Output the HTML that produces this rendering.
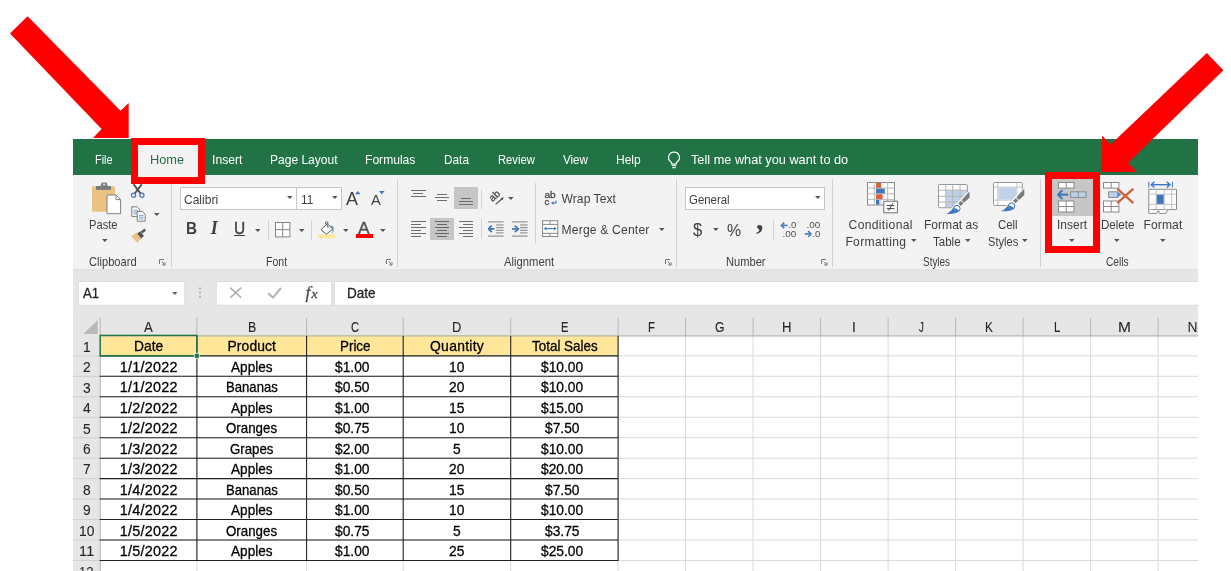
<!DOCTYPE html>
<html lang="en">
<head>
<meta charset="utf-8">
<title>Excel Home tab and Insert button</title>
<style>
html,body{margin:0;padding:0;background:#fff;}
body{width:1231px;height:571px;position:relative;overflow:hidden;font-family:"Liberation Sans", sans-serif;}
#stage{position:absolute;left:0;top:0;width:1231px;height:571px;will-change:transform;}
.t{position:absolute;white-space:nowrap;line-height:20px;display:block;}
.s{font-family:"Liberation Serif", serif;}
.b{position:absolute;display:block;}
</style>
</head>
<body>
<div id="stage">
<div class="b" style="left:73.00px;top:139.00px;width:1125.00px;height:36.00px;background:#217346;"></div>
<div class="b" style="left:73.00px;top:175.00px;width:1125.00px;height:94.00px;background:#f3f3f3;"></div>
<div class="b" style="left:73.00px;top:269.00px;width:1125.00px;height:302.00px;background:#e6e6e6;"></div>
<div class="b" style="left:73.00px;top:268.00px;width:1125.00px;height:3.00px;background:linear-gradient(#f3f3f3,#e9e9e9 45%,#dfdfdf 75%,#e4e4e4);"></div>
<div class="b" style="left:132.00px;top:143.00px;width:72.00px;height:33.00px;background:#f3f3f3;"></div>
<span class="t" style="left:95.30px;top:152px;font-size:13.4px;line-height:15px;color:#fff;transform:scaleX(0.8151);transform-origin:0 0;">File</span>
<span class="t" style="left:212.00px;top:152px;font-size:13.4px;line-height:15px;color:#fff;transform:scaleX(0.9101);transform-origin:0 0;">Insert</span>
<span class="t" style="left:269.80px;top:152px;font-size:13.4px;line-height:15px;color:#fff;transform:scaleX(0.8983);transform-origin:0 0;">Page Layout</span>
<span class="t" style="left:365.00px;top:152px;font-size:13.4px;line-height:15px;color:#fff;transform:scaleX(0.9025);transform-origin:0 0;">Formulas</span>
<span class="t" style="left:444.30px;top:152px;font-size:13.4px;line-height:15px;color:#fff;transform:scaleX(0.8832);transform-origin:0 0;">Data</span>
<span class="t" style="left:497.90px;top:152px;font-size:13.4px;line-height:15px;color:#fff;transform:scaleX(0.8376);transform-origin:0 0;">Review</span>
<span class="t" style="left:562.60px;top:152px;font-size:13.4px;line-height:15px;color:#fff;transform:scaleX(0.8680);transform-origin:0 0;">View</span>
<span class="t" style="left:616.20px;top:152px;font-size:13.4px;line-height:15px;color:#fff;transform:scaleX(0.8963);transform-origin:0 0;">Help</span>
<span class="t" style="left:690.90px;top:152px;font-size:13.4px;line-height:15px;color:#fff;transform:scaleX(0.9513);transform-origin:0 0;">Tell me what you want to do</span>
<span class="t" style="left:150.30px;top:152px;font-size:13.4px;line-height:15px;color:#217346;transform:scaleX(0.9540);transform-origin:0 0;">Home</span>
<svg class="b" style="left:666.00px;top:150.50px" width="16" height="19" viewBox="0 0 16 19"><path d="M8 1.2 a5.3 5.3 0 0 1 3.2 9.6 c-.7 .6 -1 1.3 -1 2.3 h-4.4 c0 -1 -.3 -1.7 -1 -2.3 A5.3 5.3 0 0 1 8 1.2 Z" fill="none" stroke="#fff" stroke-width="1.2"/><path d="M5.9 14.8 h4.2 M6.3 16.6 h3.4" stroke="#fff" stroke-width="1.1"/></svg>
<div class="b" style="left:171.00px;top:178.50px;width:1.00px;height:88.00px;background:#d2d2d2;"></div>
<div class="b" style="left:396.80px;top:178.50px;width:1.00px;height:88.00px;background:#d2d2d2;"></div>
<div class="b" style="left:676.10px;top:178.50px;width:1.00px;height:88.00px;background:#d2d2d2;"></div>
<div class="b" style="left:832.00px;top:178.50px;width:1.00px;height:88.00px;background:#d2d2d2;"></div>
<div class="b" style="left:1039.80px;top:178.50px;width:1.00px;height:88.00px;background:#d2d2d2;"></div>
<svg class="b" style="left:91.00px;top:181.00px" width="34" height="35" viewBox="0 0 34 35"><rect x="1" y="5.2" width="23" height="25.6" rx="1.4" fill="#eac282"/><rect x="5" y="5" width="15" height="3.9" fill="#7a7a7a"/><path d="M9.9 5.2 V3.4 a1.8 1.8 0 0 1 1.8 -1.8 h2.8 a1.8 1.8 0 0 1 1.8 1.8 V5.2 Z" fill="#7a7a7a"/><rect x="12.1" y="2.7" width="2" height="1.5" fill="#f3f3f3"/><path d="M16 14 H25 L29.6 18.6 V32.7 H16 Z" fill="#fff" stroke="#808080" stroke-width="1"/><path d="M25 14 V18.6 H29.6" fill="none" stroke="#808080" stroke-width="1"/></svg>
<span class="t" style="left:89.30px;top:218px;font-size:12.1px;line-height:14px;color:#3e3e3e;transform:scaleX(0.9211);transform-origin:0 0;">Paste</span>
<svg class="b" style="left:100.50px;top:238.15px" width="7.6" height="4.9" viewBox="0 0 7.6 4.9"><path d="M1 1 L6.6 1 L3.8 3.9 Z" fill="#555"/></svg>
<svg class="b" style="left:130.00px;top:183.00px" width="16" height="16" viewBox="0 0 16 16"><path d="M3.6 1.2 L10.8 10.8 M11.8 1.2 L4.6 10.8" stroke="#4a4a4a" stroke-width="1.8" fill="none"/><circle cx="3.5" cy="12.3" r="2.1" fill="none" stroke="#3f76bd" stroke-width="1.2"/><circle cx="11.9" cy="12.3" r="2.1" fill="none" stroke="#3f76bd" stroke-width="1.2"/></svg>
<svg class="b" style="left:131.00px;top:206.00px" width="16" height="16" viewBox="0 0 16 16"><path d="M0.8 0.8 H6 L8.6 3.4 V10.4 H0.8 Z" fill="#fff" stroke="#7a7a7a" stroke-width="1"/><path d="M2.4 4.2 H7 M2.4 6 H7 M2.4 7.8 H7" stroke="#5b8ccb" stroke-width=".8"/><path d="M6.2 5.4 H11.4 L14.2 8.2 V15.2 H6.2 Z" fill="#fff" stroke="#7a7a7a" stroke-width="1"/><path d="M8 9.4 H12.6 M8 11.2 H12.6 M8 13 H12.6" stroke="#5b8ccb" stroke-width=".8"/></svg>
<svg class="b" style="left:153.00px;top:211.75px" width="7.6" height="4.9" viewBox="0 0 7.6 4.9"><path d="M1 1 L6.6 1 L3.8 3.9 Z" fill="#555"/></svg>
<svg class="b" style="left:130.00px;top:228.00px" width="17" height="16" viewBox="0 0 17 16"><path d="M1 8.2 L6.4 4.4 L11 10.2 L7.6 15 Z" fill="#eac282"/><path d="M7.2 5.6 L11 10.4 L14 8 L10.2 3.2 Z" fill="#555"/><path d="M11.6 4.4 L15.2 1.4" stroke="#555" stroke-width="2.6"/></svg>
<span class="t" style="left:89.30px;top:255px;font-size:12.1px;line-height:14px;color:#3e3e3e;transform:scaleX(0.9191);transform-origin:0 0;">Clipboard</span>
<svg class="b" style="left:159.30px;top:258.80px" width="7" height="7" viewBox="0 0 7 7"><path d="M0.5 5 V0.5 H5" fill="none" stroke="#777" stroke-width="1"/><path d="M2.6 2.6 L6 6 M6 3.2 V6 H3.2" fill="none" stroke="#777" stroke-width="1"/></svg>
<div class="b" style="left:180.00px;top:187.00px;width:161.60px;height:23.00px;background:#fff;border:1px solid #c6c6c6;box-sizing:border-box;"></div>
<div class="b" style="left:296.00px;top:188.00px;width:1.00px;height:21.00px;background:#c6c6c6;"></div>
<span class="t" style="left:183.70px;top:193px;font-size:12.2px;line-height:14px;color:#3e3e3e;transform:scaleX(0.9863);transform-origin:0 0;">Calibri</span>
<svg class="b" style="left:286.20px;top:195.15px" width="7.6" height="4.9" viewBox="0 0 7.6 4.9"><path d="M1 1 L6.6 1 L3.8 3.9 Z" fill="#555"/></svg>
<span class="t" style="left:301.00px;top:193px;font-size:12.2px;line-height:14px;color:#3e3e3e;transform:scaleX(0.9712);transform-origin:0 0;">11</span>
<svg class="b" style="left:331.00px;top:195.15px" width="7.6" height="4.9" viewBox="0 0 7.6 4.9"><path d="M1 1 L6.6 1 L3.8 3.9 Z" fill="#555"/></svg>
<span class="t" style="left:346.20px;top:189px;font-size:17.8px;line-height:20px;color:#3e3e3e;transform:scaleX(1.0107);transform-origin:0 0;">A</span>
<svg class="b" style="left:355.40px;top:190.60px" width="6" height="4" viewBox="0 0 6 4"><path d="M0 3.2 L2.8 0 L5.6 3.2 Z" fill="#3f76bd"/></svg>
<span class="t" style="left:370.60px;top:193px;font-size:13.8px;line-height:15px;color:#3e3e3e;transform:scaleX(1.0647);transform-origin:0 0;">A</span>
<svg class="b" style="left:379.20px;top:190.80px" width="6" height="4" viewBox="0 0 6 4"><path d="M0 0 L5.6 0 L2.8 3.2 Z" fill="#3f76bd"/></svg>
<span class="t" style="left:186.20px;top:220px;font-size:15.8px;line-height:17px;color:#404040;font-weight:bold;transform:scaleX(0.9640);transform-origin:0 0;">B</span>
<span class="t s" style="left:210.80px;top:218px;font-size:18px;line-height:20px;color:#404040;font-weight:bold;font-style:italic;">I</span>
<span class="t" style="left:233.80px;top:219px;font-size:16.3px;line-height:18px;color:#404040;transform:scaleX(0.9515);transform-origin:0 0;-webkit-text-stroke:0.35px #404040;">U</span>
<div class="b" style="left:234.20px;top:235.00px;width:10.40px;height:1.20px;background:#404040;"></div>
<svg class="b" style="left:254.40px;top:227.65px" width="7.6" height="4.9" viewBox="0 0 7.6 4.9"><path d="M1 1 L6.6 1 L3.8 3.9 Z" fill="#555"/></svg>
<div class="b" style="left:268.00px;top:220.00px;width:1.00px;height:20.00px;background:#d2d2d2;"></div>
<svg class="b" style="left:275.00px;top:222.00px" width="16" height="16" viewBox="0 0 16 16"><rect x=".5" y=".5" width="14.4" height="14.4" fill="#fff" stroke="#858585" stroke-width="1"/><path d="M7.7 .5 V14.9 M.5 7.7 H14.9" stroke="#858585" stroke-width="1"/></svg>
<svg class="b" style="left:298.00px;top:227.65px" width="7.6" height="4.9" viewBox="0 0 7.6 4.9"><path d="M1 1 L6.6 1 L3.8 3.9 Z" fill="#555"/></svg>
<div class="b" style="left:311.20px;top:220.00px;width:1.00px;height:20.00px;background:#d2d2d2;"></div>
<svg class="b" style="left:318.00px;top:220.50px" width="18" height="18" viewBox="0 0 18 18"><rect x=".2" y="13.4" width="17" height="3.9" fill="#ffe699"/><path d="M3 8.8 L9.2 2.6 L14.7 8 L8.4 13.1 Z" fill="#fff" stroke="#5a5a5a" stroke-width="1" stroke-linejoin="round"/><circle cx="8.7" cy="2" r="1.3" fill="none" stroke="#5a5a5a" stroke-width=".9"/><path d="M8.9 3.2 L9.9 5.6" stroke="#5a5a5a" stroke-width=".9"/><circle cx="9.9" cy="5.9" r=".75" fill="#5a5a5a"/><path d="M12.4 4.6 C14.6 4.8 15.9 6.4 15.6 8.6 C15.5 10.4 14.9 12 14.2 13 C14.5 10.8 14.6 9.2 14.9 8 Z" fill="#3f76bd"/></svg>
<svg class="b" style="left:342.00px;top:227.65px" width="7.6" height="4.9" viewBox="0 0 7.6 4.9"><path d="M1 1 L6.6 1 L3.8 3.9 Z" fill="#555"/></svg>
<span class="t" style="left:358.00px;top:219px;font-size:16.9px;line-height:19px;color:#505050;transform:scaleX(1.0379);transform-origin:0 0;-webkit-text-stroke:0.4px;">A</span>
<div class="b" style="left:355.50px;top:234.00px;width:17.20px;height:4.00px;background:#fe0000;"></div>
<svg class="b" style="left:378.80px;top:227.65px" width="7.6" height="4.9" viewBox="0 0 7.6 4.9"><path d="M1 1 L6.6 1 L3.8 3.9 Z" fill="#555"/></svg>
<span class="t" style="left:265.50px;top:255px;font-size:12.1px;line-height:14px;color:#3e3e3e;transform:scaleX(0.8715);transform-origin:0 0;">Font</span>
<svg class="b" style="left:386.00px;top:258.80px" width="7" height="7" viewBox="0 0 7 7"><path d="M0.5 5 V0.5 H5" fill="none" stroke="#777" stroke-width="1"/><path d="M2.6 2.6 L6 6 M6 3.2 V6 H3.2" fill="none" stroke="#777" stroke-width="1"/></svg>
<div class="b" style="left:453.90px;top:187.30px;width:24.00px;height:21.70px;background:#c6c6c6;"></div>
<div class="b" style="left:430.30px;top:218.40px;width:23.60px;height:21.70px;background:#c6c6c6;"></div>
<div class="b" style="left:411.00px;top:189.60px;width:14.60px;height:1.00px;background:#6e6e6e;"></div>
<div class="b" style="left:413.20px;top:192.90px;width:10.20px;height:1.00px;background:#6e6e6e;"></div>
<div class="b" style="left:411.00px;top:196.20px;width:14.60px;height:1.00px;background:#6e6e6e;"></div>
<div class="b" style="left:437.20px;top:193.90px;width:9.80px;height:1.00px;background:#6e6e6e;"></div>
<div class="b" style="left:435.00px;top:196.90px;width:14.20px;height:1.00px;background:#6e6e6e;"></div>
<div class="b" style="left:437.20px;top:200.00px;width:9.80px;height:1.00px;background:#6e6e6e;"></div>
<div class="b" style="left:461.20px;top:197.90px;width:10.00px;height:1.00px;background:#6e6e6e;"></div>
<div class="b" style="left:459.00px;top:200.90px;width:14.40px;height:1.00px;background:#6e6e6e;"></div>
<div class="b" style="left:459.00px;top:204.00px;width:14.40px;height:1.00px;background:#6e6e6e;"></div>
<div class="b" style="left:481.00px;top:188.50px;width:1.00px;height:20.00px;background:#d2d2d2;"></div>
<svg class="b" style="left:487.00px;top:188.00px" width="20" height="20" viewBox="0 0 20 20"><text x="0" y="0" font-family="Liberation Sans, sans-serif" font-size="10" fill="#4a4a4a" stroke="#4a4a4a" stroke-width=".3" transform="translate(5.6 14) rotate(-42)">ab</text><path d="M8.6 16.4 L15.6 10.2" stroke="#505050" stroke-width="1.2" fill="none"/><path d="M16.6 9.2 L13.6 10 L15.8 12.3 Z" fill="#505050"/></svg>
<svg class="b" style="left:506.60px;top:195.65px" width="7.6" height="4.9" viewBox="0 0 7.6 4.9"><path d="M1 1 L6.6 1 L3.8 3.9 Z" fill="#555"/></svg>
<div class="b" style="left:535.10px;top:182.60px;width:1.00px;height:61.20px;background:#d2d2d2;"></div>
<svg class="b" style="left:544.00px;top:190.00px" width="15" height="17" viewBox="0 0 15 17"><text x=".5" y="7.8" font-family="Liberation Sans, sans-serif" font-size="9.6" fill="#4a4a4a" stroke="#4a4a4a" stroke-width=".3" textLength="11.2" lengthAdjust="spacingAndGlyphs">ab</text><text x=".5" y="14.7" font-family="Liberation Sans, sans-serif" font-size="9.6" fill="#4a4a4a" stroke="#4a4a4a" stroke-width=".3">c</text><path d="M12 10.6 V13 H8.2" stroke="#3f76bd" stroke-width="1.1" fill="none"/><path d="M7 13 L9.6 11.2 V14.8 Z" fill="#3f76bd"/></svg>
<span class="t" style="left:561.50px;top:192px;font-size:12.1px;line-height:14px;color:#3e3e3e;letter-spacing:0.059px;">Wrap Text</span>
<div class="b" style="left:411.00px;top:221.10px;width:14.60px;height:1.00px;background:#6e6e6e;"></div>
<div class="b" style="left:411.00px;top:224.00px;width:10.40px;height:1.00px;background:#6e6e6e;"></div>
<div class="b" style="left:411.00px;top:226.90px;width:14.60px;height:1.00px;background:#6e6e6e;"></div>
<div class="b" style="left:411.00px;top:229.80px;width:10.40px;height:1.00px;background:#6e6e6e;"></div>
<div class="b" style="left:411.00px;top:232.70px;width:14.60px;height:1.00px;background:#6e6e6e;"></div>
<div class="b" style="left:411.00px;top:235.60px;width:10.40px;height:1.00px;background:#6e6e6e;"></div>
<div class="b" style="left:435.00px;top:221.10px;width:14.20px;height:1.00px;background:#666;"></div>
<div class="b" style="left:437.40px;top:224.00px;width:9.40px;height:1.00px;background:#666;"></div>
<div class="b" style="left:435.00px;top:226.90px;width:14.20px;height:1.00px;background:#666;"></div>
<div class="b" style="left:437.40px;top:229.80px;width:9.40px;height:1.00px;background:#666;"></div>
<div class="b" style="left:435.00px;top:232.70px;width:14.20px;height:1.00px;background:#666;"></div>
<div class="b" style="left:437.40px;top:235.60px;width:9.40px;height:1.00px;background:#666;"></div>
<div class="b" style="left:459.00px;top:221.10px;width:14.40px;height:1.00px;background:#6e6e6e;"></div>
<div class="b" style="left:463.20px;top:224.00px;width:10.20px;height:1.00px;background:#6e6e6e;"></div>
<div class="b" style="left:459.00px;top:226.90px;width:14.40px;height:1.00px;background:#6e6e6e;"></div>
<div class="b" style="left:463.20px;top:229.80px;width:10.20px;height:1.00px;background:#6e6e6e;"></div>
<div class="b" style="left:459.00px;top:232.70px;width:14.40px;height:1.00px;background:#6e6e6e;"></div>
<div class="b" style="left:463.20px;top:235.60px;width:10.20px;height:1.00px;background:#6e6e6e;"></div>
<div class="b" style="left:481.00px;top:219.10px;width:1.00px;height:20.00px;background:#d2d2d2;"></div>
<svg class="b" style="left:488.40px;top:220.50px" width="16" height="17" viewBox="0 0 16 17"><path d="M0 0.9 H15.6" stroke="#808080" stroke-width="1"/><path d="M8 4.0 H15.6" stroke="#808080" stroke-width="1"/><path d="M8 6.7 H15.6" stroke="#808080" stroke-width="1"/><path d="M8 9.3 H15.6" stroke="#808080" stroke-width="1"/><path d="M8 11.9 H15.6" stroke="#808080" stroke-width="1"/><path d="M0 15.1 H15.6" stroke="#808080" stroke-width="1"/><path d="M6.4 7.9 H2" stroke="#3f76bd" stroke-width="1.8" fill="none"/><path d="M3.8 4.6 L0.4 7.9 L3.8 11.2" stroke="#3f76bd" stroke-width="1.7" fill="none"/></svg>
<svg class="b" style="left:512.40px;top:220.50px" width="16" height="17" viewBox="0 0 16 17"><path d="M0 0.9 H15.6" stroke="#808080" stroke-width="1"/><path d="M8 4.0 H15.6" stroke="#808080" stroke-width="1"/><path d="M8 6.7 H15.6" stroke="#808080" stroke-width="1"/><path d="M8 9.3 H15.6" stroke="#808080" stroke-width="1"/><path d="M8 11.9 H15.6" stroke="#808080" stroke-width="1"/><path d="M0 15.1 H15.6" stroke="#808080" stroke-width="1"/><path d="M0.2 7.9 H4.6" stroke="#3f76bd" stroke-width="1.8" fill="none"/><path d="M2.8 4.6 L6.4 7.9 L2.8 11.2" stroke="#3f76bd" stroke-width="1.7" fill="none"/></svg>
<svg class="b" style="left:542.00px;top:220.00px" width="17" height="17.5" viewBox="0 0 17 17.5"><rect x=".6" y=".7" width="15.2" height="15.8" fill="#fff" stroke="#858585" stroke-width="1"/><path d="M.6 4.4 H15.8 M.6 13.3 H15.8 M8 .7 V4.4 M8 13.3 V16.5" stroke="#858585" stroke-width="1"/><path d="M3.4 8.6 H13" stroke="#3f76bd" stroke-width="1.1" fill="none"/><path d="M1.8 8.6 L4.4 6.8 V10.4 Z M14.6 8.6 L12 6.8 V10.4 Z" fill="#3f76bd"/></svg>
<span class="t" style="left:561.50px;top:223px;font-size:12.1px;line-height:14px;color:#3e3e3e;letter-spacing:0.192px;">Merge &amp; Center</span>
<svg class="b" style="left:658.20px;top:226.95px" width="7.6" height="4.9" viewBox="0 0 7.6 4.9"><path d="M1 1 L6.6 1 L3.8 3.9 Z" fill="#555"/></svg>
<span class="t" style="left:503.80px;top:255px;font-size:12.1px;line-height:14px;color:#3e3e3e;transform:scaleX(0.9330);transform-origin:0 0;">Alignment</span>
<svg class="b" style="left:665.00px;top:258.80px" width="7" height="7" viewBox="0 0 7 7"><path d="M0.5 5 V0.5 H5" fill="none" stroke="#777" stroke-width="1"/><path d="M2.6 2.6 L6 6 M6 3.2 V6 H3.2" fill="none" stroke="#777" stroke-width="1"/></svg>
<div class="b" style="left:685.00px;top:187.00px;width:140.00px;height:23.00px;background:#fff;border:1px solid #c6c6c6;box-sizing:border-box;"></div>
<span class="t" style="left:689.30px;top:193px;font-size:12.2px;line-height:14px;color:#3e3e3e;transform:scaleX(0.9377);transform-origin:0 0;">General</span>
<svg class="b" style="left:814.00px;top:195.15px" width="7.6" height="4.9" viewBox="0 0 7.6 4.9"><path d="M1 1 L6.6 1 L3.8 3.9 Z" fill="#555"/></svg>
<span class="t" style="left:693.00px;top:219px;font-size:18.6px;line-height:21px;color:#404040;transform:scaleX(0.8894);transform-origin:0 0;">$</span>
<svg class="b" style="left:712.20px;top:227.15px" width="7.6" height="4.9" viewBox="0 0 7.6 4.9"><path d="M1 1 L6.6 1 L3.8 3.9 Z" fill="#555"/></svg>
<span class="t" style="left:727.40px;top:220px;font-size:17.2px;line-height:20px;color:#404040;transform:scaleX(0.9220);transform-origin:0 0;">%</span>
<span class="t s" style="left:754.40px;top:217px;font-size:30px;line-height:33px;color:#404040;font-weight:bold;">’</span>
<div class="b" style="left:772.70px;top:220.30px;width:1.00px;height:19.50px;background:#d2d2d2;"></div>
<svg class="b" style="left:780.00px;top:221.00px" width="18" height="17" viewBox="0 0 18 17"><path d="M7.6 4.4 H2.6" stroke="#3f76bd" stroke-width="1.6" fill="none"/><path d="M4.2 1.6 L1.4 4.4 L4.2 7.2" stroke="#3f76bd" stroke-width="1.5" fill="none"/><text x="8.4" y="6.8" textLength="8" font-family="Liberation Sans, sans-serif" font-size="8.8" fill="#505050" lengthAdjust="spacingAndGlyphs">.0</text><text x="2.6" y="15.8" textLength="13.8" font-family="Liberation Sans, sans-serif" font-size="8.8" fill="#505050" lengthAdjust="spacingAndGlyphs">.00</text></svg>
<svg class="b" style="left:804.00px;top:221.00px" width="18" height="17" viewBox="0 0 18 17"><text x="2.6" y="6.8" textLength="13.8" font-family="Liberation Sans, sans-serif" font-size="8.8" fill="#505050" lengthAdjust="spacingAndGlyphs">.00</text><path d="M0.8 12.9 H5.8" stroke="#3f76bd" stroke-width="1.6" fill="none"/><path d="M4.2 10.1 L7 12.9 L4.2 15.7" stroke="#3f76bd" stroke-width="1.5" fill="none"/><text x="8.4" y="15.8" textLength="8" font-family="Liberation Sans, sans-serif" font-size="8.8" fill="#505050" lengthAdjust="spacingAndGlyphs">.0</text></svg>
<span class="t" style="left:725.80px;top:255px;font-size:12.1px;line-height:14px;color:#3e3e3e;transform:scaleX(0.9202);transform-origin:0 0;">Number</span>
<svg class="b" style="left:821.00px;top:258.80px" width="7" height="7" viewBox="0 0 7 7"><path d="M0.5 5 V0.5 H5" fill="none" stroke="#777" stroke-width="1"/><path d="M2.6 2.6 L6 6 M6 3.2 V6 H3.2" fill="none" stroke="#777" stroke-width="1"/></svg>
<svg class="b" style="left:866.60px;top:182.20px" width="32" height="32" viewBox="0 0 32 32"><rect x=".5" y=".5" width="27" height="22.5" fill="#fff" stroke="#8a8a8a" stroke-width="1"/><path d="M7.3 .5 V23" stroke="#b9b9b9" stroke-width="1"/><path d="M14 .5 V23" stroke="#b9b9b9" stroke-width="1"/><path d="M20.7 .5 V23" stroke="#b9b9b9" stroke-width="1"/><path d="M.5 6.1 H27.5" stroke="#b9b9b9" stroke-width="1"/><path d="M.5 11.8 H27.5" stroke="#b9b9b9" stroke-width="1"/><path d="M.5 17.4 H27.5" stroke="#b9b9b9" stroke-width="1"/><rect x="9" y="1" width="5" height="4.8" fill="#d9623b"/><rect x="9" y="6.6" width="8.8" height="4.8" fill="#3f76bd"/><rect x="9" y="12.3" width="6.6" height="4.8" fill="#d9623b"/><rect x="9" y="18" width="3.4" height="4.6" fill="#3f76bd"/><rect x="16.8" y="19.2" width="13.6" height="11.6" fill="#fff" stroke="#6e6e6e" stroke-width="1"/><path d="M19.8 23.6 H27.4 M19.8 26.6 H27.4 M25.6 21.4 L21.6 28.8" stroke="#444" stroke-width="1"/></svg>
<span class="t" style="left:848.60px;top:218px;font-size:12.1px;line-height:14px;color:#3e3e3e;letter-spacing:0.336px;">Conditional</span>
<span class="t" style="left:845.40px;top:235px;font-size:12.1px;line-height:14px;color:#3e3e3e;letter-spacing:0.319px;">Formatting</span>
<svg class="b" style="left:909.60px;top:238.15px" width="7.6" height="4.9" viewBox="0 0 7.6 4.9"><path d="M1 1 L6.6 1 L3.8 3.9 Z" fill="#555"/></svg>
<svg class="b" style="left:937.60px;top:184.00px" width="34" height="32" viewBox="0 0 34 32"><rect x=".5" y=".5" width="28.9" height="23.2" rx="1" fill="#fff" stroke="#989898" stroke-width="1"/><rect x="7.8" y="6.2" width="21.2" height="17" fill="#bfd2ea"/><path d="M7.8 1 V23.4" stroke="#b4b4b4" stroke-width="1"/><path d="M14.7 1 V23.4" stroke="#b4b4b4" stroke-width="1"/><path d="M22.1 1 V23.4" stroke="#b4b4b4" stroke-width="1"/><path d="M1 6.2 H29" stroke="#b4b4b4" stroke-width="1"/><path d="M1 12.3 H29" stroke="#b4b4b4" stroke-width="1"/><path d="M1 18 H29" stroke="#b4b4b4" stroke-width="1"/><g transform="translate(0 0)"><path d="M31 6.6 L12.6 25 H31 Z" fill="#f3f3f3"/><path d="M31.4 7.4 L31.6 13.6 L26.2 18.5 L23.6 16.2 Z" fill="#7a7a7a" stroke="#f3f3f3" stroke-width="1" paint-order="stroke"/><path d="M20.3 19.3 L23 16.9 L25.5 19.1 L22.7 21.9 Z" fill="#7a7a7a" stroke="#f3f3f3" stroke-width="1" paint-order="stroke"/><path d="M8 29.8 C12 28.4 14.4 25.6 15.4 23 L21 27 C18.4 29.9 12.6 30.2 8 29.8 Z" fill="#3f76bd" stroke="#f3f3f3" stroke-width="1" paint-order="stroke"/><circle cx="18.9" cy="24.6" r="3.2" fill="#fff" stroke="#3f76bd" stroke-width="1"/><path d="M15.7 23.8 C16.6 24.6 17.4 24.8 18.1 24.3 C18.6 25.4 19.6 25.8 20.6 25.4 C20.8 26.4 20.4 27.2 19.8 27.8 C18.4 28.4 16.4 27.4 15.7 23.8 Z" fill="#3f76bd"/></g></svg>
<span class="t" style="left:924.40px;top:218px;font-size:12.1px;line-height:14px;color:#3e3e3e;transform:scaleX(0.9970);transform-origin:0 0;">Format as</span>
<span class="t" style="left:933.40px;top:235px;font-size:12.1px;line-height:14px;color:#3e3e3e;transform:scaleX(0.9541);transform-origin:0 0;">Table</span>
<svg class="b" style="left:963.90px;top:238.15px" width="7.6" height="4.9" viewBox="0 0 7.6 4.9"><path d="M1 1 L6.6 1 L3.8 3.9 Z" fill="#555"/></svg>
<svg class="b" style="left:992.60px;top:182.20px" width="34" height="32" viewBox="0 0 34 32"><rect x=".5" y=".5" width="28.8" height="23" rx="1" fill="#fff" stroke="#989898" stroke-width="1"/><path d="M4.8 1 V23 M23.9 1 V23 M1 5.1 H29 M1 18.1 H29" stroke="#c4c4c4" stroke-width="1"/><rect x="5.4" y="5.7" width="18" height="11.9" fill="#bfd2ea"/><g transform="translate(-0.2 -0.6)"><path d="M31 6.6 L12.6 25 H31 Z" fill="#f3f3f3"/><path d="M31.4 7.4 L31.6 13.6 L26.2 18.5 L23.6 16.2 Z" fill="#7a7a7a" stroke="#f3f3f3" stroke-width="1" paint-order="stroke"/><path d="M20.3 19.3 L23 16.9 L25.5 19.1 L22.7 21.9 Z" fill="#7a7a7a" stroke="#f3f3f3" stroke-width="1" paint-order="stroke"/><path d="M8 29.8 C12 28.4 14.4 25.6 15.4 23 L21 27 C18.4 29.9 12.6 30.2 8 29.8 Z" fill="#3f76bd" stroke="#f3f3f3" stroke-width="1" paint-order="stroke"/><circle cx="18.9" cy="24.6" r="3.2" fill="#fff" stroke="#3f76bd" stroke-width="1"/><path d="M15.7 23.8 C16.6 24.6 17.4 24.8 18.1 24.3 C18.6 25.4 19.6 25.8 20.6 25.4 C20.8 26.4 20.4 27.2 19.8 27.8 C18.4 28.4 16.4 27.4 15.7 23.8 Z" fill="#3f76bd"/></g></svg>
<span class="t" style="left:997.60px;top:218px;font-size:12.1px;line-height:14px;color:#3e3e3e;transform:scaleX(0.9403);transform-origin:0 0;">Cell</span>
<span class="t" style="left:987.60px;top:235px;font-size:12.1px;line-height:14px;color:#3e3e3e;transform:scaleX(0.9165);transform-origin:0 0;">Styles</span>
<svg class="b" style="left:1021.30px;top:238.15px" width="7.6" height="4.9" viewBox="0 0 7.6 4.9"><path d="M1 1 L6.6 1 L3.8 3.9 Z" fill="#555"/></svg>
<span class="t" style="left:922.90px;top:255px;font-size:12.1px;line-height:14px;color:#3e3e3e;transform:scaleX(0.8225);transform-origin:0 0;">Styles</span>
<div class="b" style="left:1050.00px;top:178.00px;width:44.00px;height:37.50px;background:#c6c6c6;"></div>
<svg class="b" style="left:1056.60px;top:182.40px" width="31" height="31" viewBox="-1 0 31 31"><rect x=".5" y=".5" width="15.4" height="5.6" fill="#fff" stroke="#8a8a8a"/><path d="M8.2 .5 V6.1" stroke="#8a8a8a"/><rect x=".5" y="19" width="15.4" height="11" fill="#fff" stroke="#8a8a8a"/><path d="M8.2 19 V30 M.5 24.5 H15.9" stroke="#8a8a8a"/><rect x="12.6" y="9.8" width="15.4" height="5.6" fill="#bcd0ea" stroke="#8a8a8a"/><path d="M20.3 9.8 V15.4" stroke="#8a8a8a"/><path d="M10.2 12.6 H0.6" stroke="#3f76bd" stroke-width="2.1" fill="none"/><path d="M4.4 8.2 L0 12.6 L4.4 17" stroke="#3f76bd" stroke-width="2" fill="none"/></svg>
<svg class="b" style="left:1102.80px;top:182.40px" width="31" height="31" viewBox="0 0 31 31"><rect x=".5" y=".5" width="15.4" height="5.6" fill="#fff" stroke="#8a8a8a"/><path d="M8.2 .5 V6.1" stroke="#8a8a8a"/><rect x=".5" y="19" width="15.4" height="11" fill="#fff" stroke="#8a8a8a"/><path d="M8.2 19 V30 M.5 24.5 H15.9" stroke="#8a8a8a"/><rect x="5.6" y="9.8" width="9" height="5.6" fill="#bcd0ea" stroke="#8a8a8a"/><path d="M14.6 9.4 V15.8 L18.4 12.6 Z" fill="#5b8ccb"/><path d="M15 7.4 L29.6 20.4 M29.6 7.4 L15 20.4" stroke="#cf6239" stroke-width="2.4" stroke-linecap="round" fill="none"/></svg>
<svg class="b" style="left:1147.60px;top:181.00px" width="31" height="34" viewBox="0 0 31 34"><path d="M.8 .8 V6.6 M24.4 .8 V6.6" stroke="#3f76bd" stroke-width="1"/><path d="M3.4 3.7 H21.8" stroke="#3f76bd" stroke-width="1.4" fill="none"/><path d="M6.4 .9 L3.2 3.7 L6.4 6.5 M18.8 .9 L22 3.7 L18.8 6.5" stroke="#3f76bd" stroke-width="1.4" fill="none"/><path d="M.8 8.3 H28.5 V28.6 H.8 Z" fill="#fff" stroke="#8a8a8a"/><path d="M.8 28.6 V32.4 H8.6 L10 29.8 M10.6 29.8 L11.6 32.4 H18 L19.6 28.6" fill="#fff" stroke="#8a8a8a"/><path d="M8.2 8.8 V28.2 M16.2 8.8 V28.2 M23.8 8.8 V28.2 M1.2 13.2 H28 M1.2 23.4 H28" stroke="#c4c4c4"/><rect x="8.7" y="13.7" width="7" height="9.2" fill="#3f76bd"/></svg>
<span class="t" style="left:1056.70px;top:218px;font-size:12.1px;line-height:14px;color:#3e3e3e;transform:scaleX(0.9913);transform-origin:0 0;">Insert</span>
<span class="t" style="left:1100.60px;top:218px;font-size:12.1px;line-height:14px;color:#3e3e3e;transform:scaleX(0.9549);transform-origin:0 0;">Delete</span>
<span class="t" style="left:1143.60px;top:218px;font-size:12.1px;line-height:14px;color:#3e3e3e;letter-spacing:0.076px;">Format</span>
<svg class="b" style="left:1067.80px;top:238.15px" width="7.6" height="4.9" viewBox="0 0 7.6 4.9"><path d="M1 1 L6.6 1 L3.8 3.9 Z" fill="#555"/></svg>
<svg class="b" style="left:1112.80px;top:238.15px" width="7.6" height="4.9" viewBox="0 0 7.6 4.9"><path d="M1 1 L6.6 1 L3.8 3.9 Z" fill="#555"/></svg>
<svg class="b" style="left:1159.00px;top:238.15px" width="7.6" height="4.9" viewBox="0 0 7.6 4.9"><path d="M1 1 L6.6 1 L3.8 3.9 Z" fill="#555"/></svg>
<span class="t" style="left:1106.00px;top:255px;font-size:12.1px;line-height:14px;color:#3e3e3e;transform:scaleX(0.8440);transform-origin:0 0;">Cells</span>
<svg class="b" style="left:0.00px;top:270.00px" width="1231" height="40" viewBox="0 0 1231 40"><rect x="78.3" y="11.5" width="106.5" height="23.80000000000001" fill="#fff" stroke="#dcdcdc" stroke-width="1"/><rect x="216.3" y="11.5" width="115.3" height="23.80000000000001" fill="#fff" stroke="#dcdcdc" stroke-width="1"/><rect x="334.4" y="11.5" width="865.6" height="23.80000000000001" fill="#fff" stroke="#dcdcdc" stroke-width="1"/><rect x="1198" y="0" width="40" height="40" fill="#fff"/></svg>
<span class="t" style="left:83.00px;top:285px;font-size:14.2px;line-height:16px;color:#222;transform:scaleX(0.9269);transform-origin:0 0;-webkit-text-stroke:0.28px;">A1</span>
<svg class="b" style="left:170.80px;top:290.55px" width="7.6" height="4.9" viewBox="0 0 7.6 4.9"><path d="M1 1 L6.6 1 L3.8 3.9 Z" fill="#666"/></svg>
<svg class="b" style="left:198.00px;top:286.00px" width="4" height="14" viewBox="0 0 4 14"><path d="M1.1 1.5 h1.8 v1.8 h-1.8 Z M1.1 5.8 h1.8 v1.8 h-1.8 Z M1.1 10 h1.8 v1.8 h-1.8 Z" fill="#adadad"/></svg>
<svg class="b" style="left:229.00px;top:287.40px" width="13" height="12" viewBox="0 0 13 12"><path d="M1.2 0.6 L12.2 10.8 M12.2 0.6 L1.2 10.8" stroke="#adadad" stroke-width="1.5" fill="none"/></svg>
<svg class="b" style="left:267.00px;top:287.40px" width="15" height="12" viewBox="0 0 15 12"><path d="M1 6.2 L6 10.6 L14 1" stroke="#b4b4b4" stroke-width="2" fill="none"/></svg>
<span class="t s" style="left:305.60px;top:282px;font-size:17.5px;line-height:20px;color:#4a4a4a;font-style:italic;-webkit-text-stroke:0.3px #4a4a4a;">f</span>
<span class="t s" style="left:311.40px;top:286px;font-size:13.5px;line-height:15px;color:#4a4a4a;font-style:italic;-webkit-text-stroke:0.3px #4a4a4a;">x</span>
<span class="t" style="left:347.40px;top:285px;font-size:13.9px;line-height:16px;color:#222;transform:scaleX(0.9741);transform-origin:0 0;-webkit-text-stroke:0.28px;">Date</span>
<div class="b" style="left:100.20px;top:335.40px;width:1097.80px;height:235.60px;background:#fff;"></div>
<div class="b" style="left:100.20px;top:335.40px;width:517.90px;height:20.46px;background:#ffe699;"></div>
<svg class="b" style="left:0.00px;top:0.00px" width="1231" height="571" viewBox="0 0 1231 571"><path d="M196.90 335.4 V571 M306.60 335.4 V571 M403.20 335.4 V571 M510.70 335.4 V571 M618.10 335.4 V571 M685.60 335.4 V571 M753.10 335.4 V571 M820.60 335.4 V571 M888.10 335.4 V571 M955.60 335.4 V571 M1023.10 335.4 V571 M1090.60 335.4 V571 M1158.10 335.4 V571 M100.2 355.86 H1198 M100.2 376.32 H1198 M100.2 396.78 H1198 M100.2 417.24 H1198 M100.2 437.70 H1198 M100.2 458.16 H1198 M100.2 478.62 H1198 M100.2 499.08 H1198 M100.2 519.54 H1198 M100.2 540.00 H1198 M100.2 560.46 H1198 " stroke="#d9d9d9" stroke-width="1" fill="none"/><path d="M100.20 317.6 V335.4 M196.90 317.6 V335.4 M306.60 317.6 V335.4 M403.20 317.6 V335.4 M510.70 317.6 V335.4 M618.10 317.6 V335.4 M685.60 317.6 V335.4 M753.10 317.6 V335.4 M820.60 317.6 V335.4 M888.10 317.6 V335.4 M955.60 317.6 V335.4 M1023.10 317.6 V335.4 M1090.60 317.6 V335.4 M1158.10 317.6 V335.4 " stroke="#b9b9b9" stroke-width="1" fill="none"/><path d="M100.2 335.9 H1198" stroke="#b2b2b2" stroke-width="1.4" fill="none"/><path d="M100.2 335.4 V571" stroke="#b8b8b8" stroke-width="1.1" fill="none"/><path d="M73 355.86 H100.2 M73 376.32 H100.2 M73 396.78 H100.2 M73 417.24 H100.2 M73 437.70 H100.2 M73 458.16 H100.2 M73 478.62 H100.2 M73 499.08 H100.2 M73 519.54 H100.2 M73 540.00 H100.2 M73 560.46 H100.2 " stroke="#cfcfcf" stroke-width="1" fill="none"/></svg>
<svg class="b" style="left:83.40px;top:319.60px" width="15" height="14.4" viewBox="0 0 15 14.4"><path d="M14.6 0 V14 H0.4 Z" fill="#b9b9b9"/></svg>
<span class="t" style="left:144.16px;top:319px;font-size:13.9px;line-height:16px;color:#262626;transform:scaleX(0.9459);transform-origin:0 0;-webkit-text-stroke:0.1px;">A</span>
<span class="t" style="left:247.63px;top:319px;font-size:13.9px;line-height:16px;color:#262626;transform:scaleX(0.8888);transform-origin:0 0;-webkit-text-stroke:0.1px;">B</span>
<span class="t" style="left:350.86px;top:319px;font-size:13.9px;line-height:16px;color:#262626;transform:scaleX(0.8043);transform-origin:0 0;-webkit-text-stroke:0.1px;">C</span>
<span class="t" style="left:452.29px;top:319px;font-size:13.9px;line-height:16px;color:#262626;transform:scaleX(0.9280);transform-origin:0 0;-webkit-text-stroke:0.1px;">D</span>
<span class="t" style="left:560.70px;top:319px;font-size:13.9px;line-height:16px;color:#262626;transform:scaleX(0.7973);transform-origin:0 0;-webkit-text-stroke:0.1px;">E</span>
<span class="t" style="left:648.37px;top:319px;font-size:13.9px;line-height:16px;color:#262626;transform:scaleX(0.8188);transform-origin:0 0;-webkit-text-stroke:0.1px;">F</span>
<span class="t" style="left:714.57px;top:319px;font-size:13.9px;line-height:16px;color:#262626;transform:scaleX(0.8840);transform-origin:0 0;-webkit-text-stroke:0.1px;">G</span>
<span class="t" style="left:782.13px;top:319px;font-size:13.9px;line-height:16px;color:#262626;transform:scaleX(0.9401);transform-origin:0 0;-webkit-text-stroke:0.1px;">H</span>
<span class="t" style="left:852.44px;top:319px;font-size:13.9px;line-height:16px;color:#262626;transform:scaleX(0.9884);transform-origin:0 0;-webkit-text-stroke:0.1px;">I</span>
<span class="t" style="left:919.43px;top:319px;font-size:13.9px;line-height:16px;color:#262626;transform:scaleX(0.6952);transform-origin:0 0;-webkit-text-stroke:0.1px;">J</span>
<span class="t" style="left:985.41px;top:319px;font-size:13.9px;line-height:16px;color:#262626;transform:scaleX(0.8496);transform-origin:0 0;-webkit-text-stroke:0.1px;">K</span>
<span class="t" style="left:1053.67px;top:319px;font-size:13.9px;line-height:16px;color:#262626;transform:scaleX(0.8229);transform-origin:0 0;-webkit-text-stroke:0.1px;">L</span>
<span class="t" style="left:1117.87px;top:319px;font-size:13.9px;line-height:16px;color:#262626;transform:scaleX(1.1185);transform-origin:0 0;-webkit-text-stroke:0.1px;">M</span>
<span class="t" style="left:1187.40px;top:319px;font-size:13.9px;line-height:16px;color:#262626;width:10.6px;overflow:hidden;">N</span>
<span class="t" style="left:82.76px;top:339px;font-size:14.4px;line-height:16px;color:#262626;transform:scaleX(0.9589);transform-origin:0 0;-webkit-text-stroke:0.1px;">1</span>
<span class="t" style="left:82.76px;top:359px;font-size:14.4px;line-height:16px;color:#262626;transform:scaleX(0.9589);transform-origin:0 0;-webkit-text-stroke:0.1px;">2</span>
<span class="t" style="left:82.76px;top:380px;font-size:14.4px;line-height:16px;color:#262626;transform:scaleX(0.9589);transform-origin:0 0;-webkit-text-stroke:0.1px;">3</span>
<span class="t" style="left:82.76px;top:400px;font-size:14.4px;line-height:16px;color:#262626;transform:scaleX(0.9589);transform-origin:0 0;-webkit-text-stroke:0.1px;">4</span>
<span class="t" style="left:82.76px;top:421px;font-size:14.4px;line-height:16px;color:#262626;transform:scaleX(0.9589);transform-origin:0 0;-webkit-text-stroke:0.1px;">5</span>
<span class="t" style="left:82.76px;top:441px;font-size:14.4px;line-height:16px;color:#262626;transform:scaleX(0.9589);transform-origin:0 0;-webkit-text-stroke:0.1px;">6</span>
<span class="t" style="left:82.76px;top:461px;font-size:14.4px;line-height:16px;color:#262626;transform:scaleX(0.9589);transform-origin:0 0;-webkit-text-stroke:0.1px;">7</span>
<span class="t" style="left:82.76px;top:482px;font-size:14.4px;line-height:16px;color:#262626;transform:scaleX(0.9589);transform-origin:0 0;-webkit-text-stroke:0.1px;">8</span>
<span class="t" style="left:82.76px;top:502px;font-size:14.4px;line-height:16px;color:#262626;transform:scaleX(0.9589);transform-origin:0 0;-webkit-text-stroke:0.1px;">9</span>
<span class="t" style="left:78.92px;top:523px;font-size:14.4px;line-height:16px;color:#262626;transform:scaleX(0.9589);transform-origin:0 0;-webkit-text-stroke:0.1px;">10</span>
<span class="t" style="left:78.92px;top:543px;font-size:14.4px;line-height:16px;color:#262626;letter-spacing:0.411px;-webkit-text-stroke:0.1px;">11</span>
<span class="t" style="left:79.40px;top:564px;font-size:14.4px;line-height:16px;color:#222;transform:scaleX(0.9115);transform-origin:0 0;">12</span>
<span class="t" style="left:133.96px;top:338px;font-size:13.9px;line-height:16px;color:#000;transform:scaleX(0.9941);transform-origin:0 0;-webkit-text-stroke:0.28px;">Date</span>
<span class="t" style="left:227.51px;top:338px;font-size:13.9px;line-height:16px;color:#000;letter-spacing:0.097px;-webkit-text-stroke:0.28px;">Product</span>
<span class="t" style="left:339.63px;top:338px;font-size:13.9px;line-height:16px;color:#000;transform:scaleX(0.9642);transform-origin:0 0;-webkit-text-stroke:0.28px;">Price</span>
<span class="t" style="left:430.03px;top:338px;font-size:13.9px;line-height:16px;color:#000;letter-spacing:0.295px;-webkit-text-stroke:0.28px;">Quantity</span>
<span class="t" style="left:531.54px;top:338px;font-size:13.9px;line-height:16px;color:#000;transform:scaleX(0.9666);transform-origin:0 0;-webkit-text-stroke:0.28px;">Total Sales</span>
<span class="t" style="left:119.66px;top:359px;font-size:14.4px;line-height:16px;color:#000;letter-spacing:0.245px;-webkit-text-stroke:0.28px;">1/1/2022</span>
<span class="t" style="left:230.95px;top:359px;font-size:13.9px;line-height:16px;color:#000;transform:scaleX(0.9790);transform-origin:0 0;-webkit-text-stroke:0.28px;">Apples</span>
<span class="t" style="left:335.43px;top:359px;font-size:14.4px;line-height:16px;color:#000;transform:scaleX(0.9584);transform-origin:0 0;-webkit-text-stroke:0.28px;">$1.00</span>
<span class="t" style="left:449.27px;top:359px;font-size:14.4px;line-height:16px;color:#000;transform:scaleX(0.9589);transform-origin:0 0;-webkit-text-stroke:0.28px;">10</span>
<span class="t" style="left:541.09px;top:359px;font-size:14.4px;line-height:16px;color:#000;transform:scaleX(0.9585);transform-origin:0 0;-webkit-text-stroke:0.28px;">$10.00</span>
<span class="t" style="left:119.66px;top:379px;font-size:14.4px;line-height:16px;color:#000;letter-spacing:0.245px;-webkit-text-stroke:0.28px;">1/1/2022</span>
<span class="t" style="left:225.83px;top:379px;font-size:13.9px;line-height:16px;color:#000;transform:scaleX(0.9446);transform-origin:0 0;-webkit-text-stroke:0.28px;">Bananas</span>
<span class="t" style="left:335.43px;top:379px;font-size:14.4px;line-height:16px;color:#000;transform:scaleX(0.9584);transform-origin:0 0;-webkit-text-stroke:0.28px;">$0.50</span>
<span class="t" style="left:449.27px;top:379px;font-size:14.4px;line-height:16px;color:#000;transform:scaleX(0.9589);transform-origin:0 0;-webkit-text-stroke:0.28px;">20</span>
<span class="t" style="left:541.09px;top:379px;font-size:14.4px;line-height:16px;color:#000;transform:scaleX(0.9585);transform-origin:0 0;-webkit-text-stroke:0.28px;">$10.00</span>
<span class="t" style="left:119.66px;top:400px;font-size:14.4px;line-height:16px;color:#000;letter-spacing:0.245px;-webkit-text-stroke:0.28px;">1/2/2022</span>
<span class="t" style="left:230.95px;top:400px;font-size:13.9px;line-height:16px;color:#000;transform:scaleX(0.9790);transform-origin:0 0;-webkit-text-stroke:0.28px;">Apples</span>
<span class="t" style="left:335.43px;top:400px;font-size:14.4px;line-height:16px;color:#000;transform:scaleX(0.9584);transform-origin:0 0;-webkit-text-stroke:0.28px;">$1.00</span>
<span class="t" style="left:449.27px;top:400px;font-size:14.4px;line-height:16px;color:#000;transform:scaleX(0.9589);transform-origin:0 0;-webkit-text-stroke:0.28px;">15</span>
<span class="t" style="left:541.09px;top:400px;font-size:14.4px;line-height:16px;color:#000;transform:scaleX(0.9585);transform-origin:0 0;-webkit-text-stroke:0.28px;">$15.00</span>
<span class="t" style="left:119.66px;top:420px;font-size:14.4px;line-height:16px;color:#000;letter-spacing:0.245px;-webkit-text-stroke:0.28px;">1/2/2022</span>
<span class="t" style="left:226.19px;top:420px;font-size:13.9px;line-height:16px;color:#000;transform:scaleX(0.9589);transform-origin:0 0;-webkit-text-stroke:0.28px;">Oranges</span>
<span class="t" style="left:335.43px;top:420px;font-size:14.4px;line-height:16px;color:#000;transform:scaleX(0.9584);transform-origin:0 0;-webkit-text-stroke:0.28px;">$0.75</span>
<span class="t" style="left:449.27px;top:420px;font-size:14.4px;line-height:16px;color:#000;transform:scaleX(0.9589);transform-origin:0 0;-webkit-text-stroke:0.28px;">10</span>
<span class="t" style="left:544.93px;top:420px;font-size:14.4px;line-height:16px;color:#000;transform:scaleX(0.9584);transform-origin:0 0;-webkit-text-stroke:0.28px;">$7.50</span>
<span class="t" style="left:119.66px;top:441px;font-size:14.4px;line-height:16px;color:#000;letter-spacing:0.245px;-webkit-text-stroke:0.28px;">1/3/2022</span>
<span class="t" style="left:229.99px;top:441px;font-size:13.9px;line-height:16px;color:#000;transform:scaleX(0.9547);transform-origin:0 0;-webkit-text-stroke:0.28px;">Grapes</span>
<span class="t" style="left:335.43px;top:441px;font-size:14.4px;line-height:16px;color:#000;transform:scaleX(0.9584);transform-origin:0 0;-webkit-text-stroke:0.28px;">$2.00</span>
<span class="t" style="left:453.11px;top:441px;font-size:14.4px;line-height:16px;color:#000;transform:scaleX(0.9589);transform-origin:0 0;-webkit-text-stroke:0.28px;">5</span>
<span class="t" style="left:541.09px;top:441px;font-size:14.4px;line-height:16px;color:#000;transform:scaleX(0.9585);transform-origin:0 0;-webkit-text-stroke:0.28px;">$10.00</span>
<span class="t" style="left:119.66px;top:461px;font-size:14.4px;line-height:16px;color:#000;letter-spacing:0.245px;-webkit-text-stroke:0.28px;">1/3/2022</span>
<span class="t" style="left:230.95px;top:461px;font-size:13.9px;line-height:16px;color:#000;transform:scaleX(0.9790);transform-origin:0 0;-webkit-text-stroke:0.28px;">Apples</span>
<span class="t" style="left:335.43px;top:461px;font-size:14.4px;line-height:16px;color:#000;transform:scaleX(0.9584);transform-origin:0 0;-webkit-text-stroke:0.28px;">$1.00</span>
<span class="t" style="left:449.27px;top:461px;font-size:14.4px;line-height:16px;color:#000;transform:scaleX(0.9589);transform-origin:0 0;-webkit-text-stroke:0.28px;">20</span>
<span class="t" style="left:541.09px;top:461px;font-size:14.4px;line-height:16px;color:#000;transform:scaleX(0.9585);transform-origin:0 0;-webkit-text-stroke:0.28px;">$20.00</span>
<span class="t" style="left:119.66px;top:482px;font-size:14.4px;line-height:16px;color:#000;letter-spacing:0.245px;-webkit-text-stroke:0.28px;">1/4/2022</span>
<span class="t" style="left:225.83px;top:482px;font-size:13.9px;line-height:16px;color:#000;transform:scaleX(0.9446);transform-origin:0 0;-webkit-text-stroke:0.28px;">Bananas</span>
<span class="t" style="left:335.43px;top:482px;font-size:14.4px;line-height:16px;color:#000;transform:scaleX(0.9584);transform-origin:0 0;-webkit-text-stroke:0.28px;">$0.50</span>
<span class="t" style="left:449.27px;top:482px;font-size:14.4px;line-height:16px;color:#000;transform:scaleX(0.9589);transform-origin:0 0;-webkit-text-stroke:0.28px;">15</span>
<span class="t" style="left:544.93px;top:482px;font-size:14.4px;line-height:16px;color:#000;transform:scaleX(0.9584);transform-origin:0 0;-webkit-text-stroke:0.28px;">$7.50</span>
<span class="t" style="left:119.66px;top:502px;font-size:14.4px;line-height:16px;color:#000;letter-spacing:0.245px;-webkit-text-stroke:0.28px;">1/4/2022</span>
<span class="t" style="left:230.95px;top:502px;font-size:13.9px;line-height:16px;color:#000;transform:scaleX(0.9790);transform-origin:0 0;-webkit-text-stroke:0.28px;">Apples</span>
<span class="t" style="left:335.43px;top:502px;font-size:14.4px;line-height:16px;color:#000;transform:scaleX(0.9584);transform-origin:0 0;-webkit-text-stroke:0.28px;">$1.00</span>
<span class="t" style="left:449.27px;top:502px;font-size:14.4px;line-height:16px;color:#000;transform:scaleX(0.9589);transform-origin:0 0;-webkit-text-stroke:0.28px;">10</span>
<span class="t" style="left:541.09px;top:502px;font-size:14.4px;line-height:16px;color:#000;transform:scaleX(0.9585);transform-origin:0 0;-webkit-text-stroke:0.28px;">$10.00</span>
<span class="t" style="left:119.66px;top:523px;font-size:14.4px;line-height:16px;color:#000;letter-spacing:0.245px;-webkit-text-stroke:0.28px;">1/5/2022</span>
<span class="t" style="left:226.19px;top:523px;font-size:13.9px;line-height:16px;color:#000;transform:scaleX(0.9589);transform-origin:0 0;-webkit-text-stroke:0.28px;">Oranges</span>
<span class="t" style="left:335.43px;top:523px;font-size:14.4px;line-height:16px;color:#000;transform:scaleX(0.9584);transform-origin:0 0;-webkit-text-stroke:0.28px;">$0.75</span>
<span class="t" style="left:453.11px;top:523px;font-size:14.4px;line-height:16px;color:#000;transform:scaleX(0.9589);transform-origin:0 0;-webkit-text-stroke:0.28px;">5</span>
<span class="t" style="left:544.93px;top:523px;font-size:14.4px;line-height:16px;color:#000;transform:scaleX(0.9584);transform-origin:0 0;-webkit-text-stroke:0.28px;">$3.75</span>
<span class="t" style="left:119.66px;top:543px;font-size:14.4px;line-height:16px;color:#000;letter-spacing:0.245px;-webkit-text-stroke:0.28px;">1/5/2022</span>
<span class="t" style="left:230.95px;top:543px;font-size:13.9px;line-height:16px;color:#000;transform:scaleX(0.9790);transform-origin:0 0;-webkit-text-stroke:0.28px;">Apples</span>
<span class="t" style="left:335.43px;top:543px;font-size:14.4px;line-height:16px;color:#000;transform:scaleX(0.9584);transform-origin:0 0;-webkit-text-stroke:0.28px;">$1.00</span>
<span class="t" style="left:449.27px;top:543px;font-size:14.4px;line-height:16px;color:#000;transform:scaleX(0.9589);transform-origin:0 0;-webkit-text-stroke:0.28px;">25</span>
<span class="t" style="left:541.09px;top:543px;font-size:14.4px;line-height:16px;color:#000;transform:scaleX(0.9585);transform-origin:0 0;-webkit-text-stroke:0.28px;">$25.00</span>
<svg class="b" style="left:0.00px;top:0.00px" width="1231" height="571" viewBox="0 0 1231 571"><path d="M196.90 336.0 V560.96 M306.60 336.0 V560.96 M403.20 336.0 V560.96 M510.70 336.0 V560.96 M618.10 336.0 V560.96 M99.70 355.86 H618.60 M99.70 376.32 H618.60 M99.70 396.78 H618.60 M99.70 417.24 H618.60 M99.70 437.70 H618.60 M99.70 458.16 H618.60 M99.70 478.62 H618.60 M99.70 499.08 H618.60 M99.70 519.54 H618.60 M99.70 540.00 H618.60 M99.70 560.46 H618.60 " stroke="#202020" stroke-width="1.05" fill="none"/><rect x="100.20" y="335.40" width="96.70" height="20.46" fill="none" stroke="#217346" stroke-width="1.4"/><rect x="194.30" y="353.26" width="5" height="5" fill="#217346" stroke="#fff" stroke-width="0.8"/></svg>
<div class="b" style="left:131.00px;top:138.00px;width:74.00px;height:46.00px;border:7px solid #fe0000;box-sizing:border-box;"></div>
<div class="b" style="left:1045.00px;top:172.00px;width:55.00px;height:80.50px;border:7px solid #fe0000;box-sizing:border-box;"></div>
<svg class="b" style="left:0.00px;top:0.00px" width="1231" height="571" viewBox="0 0 1231 571"><polygon points="27.6,16.3 120.6,110.8 128.7,103 128.7,138 93,138 101.6,129 10,33.6" fill="#fe0000"/><polygon points="1206.8,53.1 1110.4,144.8 1102.2,135.6 1101,172 1136.8,172 1128.3,162.7 1223.4,70.2" fill="#fe0000"/></svg>
</div>
</body>
</html>
